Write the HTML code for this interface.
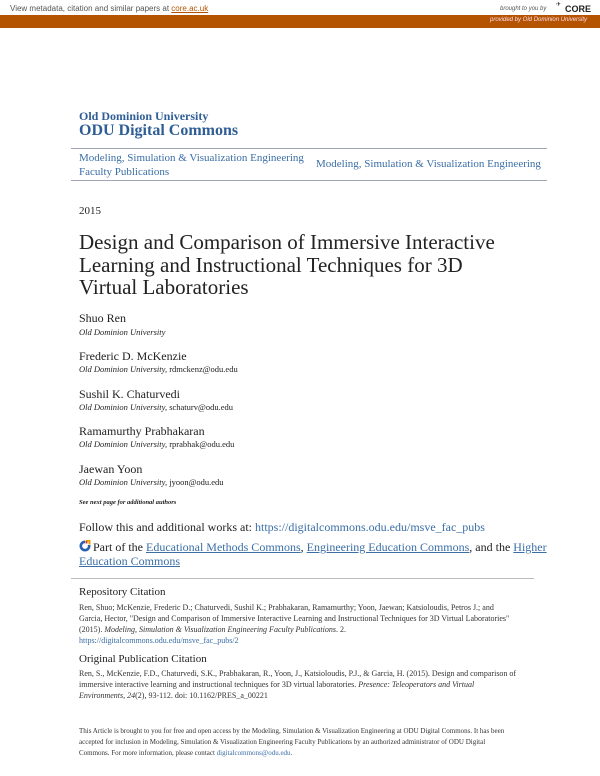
<!DOCTYPE html><html><head><style>
body{margin:0;width:600px;height:776px;background:#fff;position:relative;font-family:"Liberation Serif",serif;color:#222;overflow:hidden}
.a{position:absolute;white-space:nowrap}
.s{font-family:"Liberation Sans",sans-serif}
.b{color:#3a6ea5}
.n{font-size:12px}
.af{font-size:8.5px;font-style:italic}
.sm{font-size:8px;line-height:11px;color:#333}
</style></head><body>
<div class="a s" style="left:10px;top:4px;font-size:8px;color:#555">View metadata, citation and similar papers at <u style="color:#b55400">core.ac.uk</u></div>
<div class="a s" style="left:500px;top:6px;font-size:6px;font-style:italic;color:#555">brought to you by</div>
<div class="a s" style="left:556px;top:1px;font-size:6px">✈</div>
<div class="a s" style="left:565px;top:4px;font-size:9px;font-weight:bold">CORE</div>
<div class="a" style="left:0;top:15px;width:600px;height:13px;background:#b55400"></div>
<div class="a s" style="left:490px;top:17px;font-size:6px;font-style:italic;color:#fde">provided by Old Dominion University</div>
<div class="a" style="left:79px;top:110px;font-size:12px;line-height:13px;font-weight:bold;color:#2f5e96">Old Dominion University</div>
<div class="a" style="left:79px;top:122px;font-size:16px;line-height:18px;font-weight:bold;color:#2f5e96">ODU Digital Commons</div>
<div class="a" style="left:71px;top:148px;width:476px;border-top:1px solid #a0a8b8"></div>
<div class="a b" style="left:79px;top:151px;font-size:11px;line-height:14px">Modeling, Simulation &amp; Visualization Engineering<br>Faculty Publications</div>
<div class="a b" style="left:316px;top:158px;font-size:11px">Modeling, Simulation &amp; Visualization Engineering</div>
<div class="a" style="left:71px;top:180px;width:476px;border-top:1px solid #a0a8b8"></div>
<div class="a" style="left:79px;top:205px;font-size:11px">2015</div>
<div class="a" style="left:79px;top:231px;font-size:21px;line-height:22.5px">Design and Comparison of Immersive Interactive<br>Learning and Instructional Techniques for 3D<br>Virtual Laboratories</div>
<div class="a n" style="left:79px;top:311px">Shuo Ren</div><div class="a af" style="left:79px;top:327px">Old Dominion University</div>
<div class="a n" style="left:79px;top:349px">Frederic D. McKenzie</div><div class="a af" style="left:79px;top:364px">Old Dominion University, <span style="font-style:normal">rdmckenz@odu.edu</span></div>
<div class="a n" style="left:79px;top:387px">Sushil K. Chaturvedi</div><div class="a af" style="left:79px;top:402px">Old Dominion University, <span style="font-style:normal">schaturv@odu.edu</span></div>
<div class="a n" style="left:79px;top:424px">Ramamurthy Prabhakaran</div><div class="a af" style="left:79px;top:439px">Old Dominion University, <span style="font-style:normal">rprabhak@odu.edu</span></div>
<div class="a n" style="left:79px;top:462px">Jaewan Yoon</div><div class="a af" style="left:79px;top:477px">Old Dominion University, <span style="font-style:normal">jyoon@odu.edu</span></div>
<div class="a" style="left:79px;top:499px;font-size:6.5px;font-style:italic;font-weight:bold">See next page for additional authors</div>
<div class="a" style="left:79px;top:520px;font-size:12px">Follow this and additional works at: <span class="b">https://digitalcommons.odu.edu/msve_fac_pubs</span></div>
<div class="a" style="left:79px;top:539px;width:12px;height:12px"><svg width="12" height="12" viewBox="0 0 12 12"><circle cx="6" cy="6" r="4.2" fill="none" stroke="#2a62b0" stroke-width="2.6"/><rect x="6" y="0" width="6" height="5" fill="#fff"/><path d="M6.5 0.5h4v4" fill="none" stroke="#e8a000" stroke-width="2"/><rect x="6.5" y="1" width="2" height="2.5" fill="#d33"/></svg></div>
<div class="a" style="left:79px;top:540px;font-size:12px;line-height:14px;white-space:normal;width:470px;text-indent:14px">Part of the <u class="b">Educational Methods Commons</u>, <u class="b">Engineering Education Commons</u>, and the <u class="b">Higher Education Commons</u></div>
<div class="a" style="left:71px;top:578px;width:463px;border-top:1px solid #bbb"></div>
<div class="a" style="left:79px;top:586px;font-size:11px">Repository Citation</div>
<div class="a sm" style="left:79px;top:602px">Ren, Shuo; McKenzie, Frederic D.; Chaturvedi, Sushil K.; Prabhakaran, Ramamurthy; Yoon, Jaewan; Katsioloudis, Petros J.; and<br>Garcia, Hector, "Design and Comparison of Immersive Interactive Learning and Instructional Techniques for 3D Virtual Laboratories"<br>(2015). <i>Modeling, Simulation &amp; Visualization Engineering Faculty Publications</i>. 2.<br><span class="b">https://digitalcommons.odu.edu/msve_fac_pubs/2</span></div>
<div class="a" style="left:79px;top:653px;font-size:11px">Original Publication Citation</div>
<div class="a sm" style="left:79px;top:668px">Ren, S., McKenzie, F.D., Chaturvedi, S.K., Prabhakaran, R., Yoon, J., Katsioloudis, P.J., &amp; Garcia, H. (2015). Design and comparison of<br>immersive interactive learning and instructional techniques for 3D virtual laboratories. <i>Presence: Teleoperators and Virtual</i><br><i>Environments, 24</i>(2), 93-112. doi: 10.1162/PRES_a_00221</div>
<div class="a sm" style="left:79px;top:726px;font-size:7px">This Article is brought to you for free and open access by the Modeling, Simulation &amp; Visualization Engineering at ODU Digital Commons. It has been<br>accepted for inclusion in Modeling, Simulation &amp; Visualization Engineering Faculty Publications by an authorized administrator of ODU Digital<br>Commons. For more information, please contact <span class="b">digitalcommons@odu.edu</span>.</div>
</body></html>
